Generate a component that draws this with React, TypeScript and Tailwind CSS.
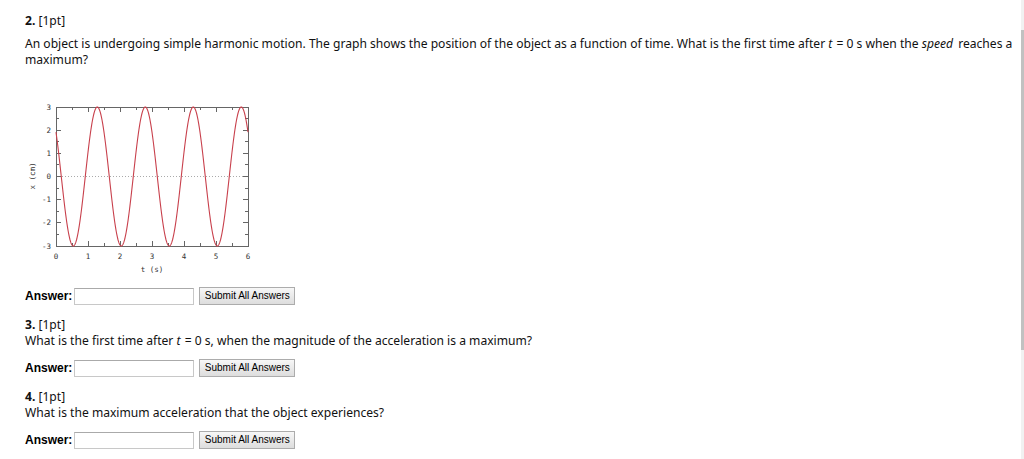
import React from "react";

const X0 = 36;
const X1 = 228;
const Y0 = 11;
const Y1 = 150;
const sx = (t: number) => X0 + ((X1 - X0) * t) / 6;
const sy = (v: number) => Y1 - ((Y1 - Y0) * (v + 3)) / 6;

function curvePath() {
  const w = (2 * Math.PI) / 1.5;
  let d = "";
  for (let i = 0; i <= 600; i++) {
    const t = (6 * i) / 600;
    const v = 3 * Math.cos(w * (t - 1.29));
    d += (i === 0 ? "M" : "L") + sx(t).toFixed(2) + " " + sy(v).toFixed(2) + " ";
  }
  return d;
}

function Graph() {
  const ticks: React.ReactNode[] = [];
  for (let i = 0; i <= 12; i++) {
    const t = i / 2;
    const len = i % 2 === 0 ? 5 : 3;
    const x = sx(t);
    ticks.push(<line key={"b" + i} x1={x} x2={x} y1={Y1} y2={Y1 - len} />);
    ticks.push(<line key={"t" + i} x1={x} x2={x} y1={Y0} y2={Y0 + len} />);
    const v = -3 + i / 2;
    const y = sy(v);
    ticks.push(<line key={"l" + i} x1={X0} x2={X0 + len} y1={y} y2={y} />);
    ticks.push(<line key={"r" + i} x1={X1} x2={X1 - len} y1={y} y2={y} />);
  }
  return (
    <svg width="240" height="180" className="block ml-[-5px]">
      <line x1={X0} x2={X1} y1={sy(0)} y2={sy(0)} stroke="#aaa" strokeWidth="1" strokeDasharray="1 2" />
      <g stroke="#666" strokeWidth="1" shapeRendering="crispEdges">
        <rect x={X0} y={Y0} width={X1 - X0} height={Y1 - Y0} fill="none" />
        {ticks}
      </g>
      <path d={curvePath()} fill="none" stroke="#c8404c" strokeWidth="1.1" />
      <g fill="#333" fontSize="7.5" fontFamily="'DejaVu Sans Mono', monospace">
        {[3, 2, 1, 0, -1, -2, -3].map((v) => (
          <text key={v} x={31} y={sy(v) + 2.5} textAnchor="end">
            {v}
          </text>
        ))}
        {[0, 1, 2, 3, 4, 5, 6].map((t) => (
          <text key={t} x={sx(t)} y={163} textAnchor="middle">
            {t}
          </text>
        ))}
        <text x={132} y={176} textAnchor="middle">t (s)</text>
        <text x={15} y={80} textAnchor="middle" transform="rotate(-90 15 80)">x (cm)</text>
      </g>
    </svg>
  );
}

function AnswerRow({ className = "" }: { className?: string }) {
  return (
    <div className={"flex items-center h-[18px] " + className}>
      <span className="font-['Liberation_Sans',Arial,sans-serif] text-[12px] font-bold text-black">Answer:</span>
      <input
        type="text"
        className="ml-[2px] w-[120px] h-[17px] bg-white border border-[#c8c8c8] border-t-[#aaa] outline-none"
      />
      <button className="ml-[5px] w-[96px] h-[18px] border border-[#acacac] bg-gradient-to-b from-[#f7f7f7] to-[#dddddd] font-['Liberation_Sans',Arial,sans-serif] text-[10px] text-black leading-none">
        Submit All Answers
      </button>
    </div>
  );
}

function Header({ n, className = "" }: { n: number; className?: string }) {
  return (
    <div className={"leading-[16px] " + className}>
      <b>{n}.</b> [1pt]
    </div>
  );
}

export default function App() {
  return (
    <div className="flex w-[1024px] h-[459px] bg-white overflow-hidden">
      <div className="flex-1 pl-[25px] pr-[6px] pt-[13px] font-['Noto_Sans',sans-serif] text-[12.1px] text-[#111]">
        <Header n={2} />
        <p className="leading-[16px] mt-[7px]">
          An object is undergoing simple harmonic motion. The graph shows the position of the object as a function of
          time. What is the first time after <i className="pr-[1px]">t</i> = 0 s when the <i className="pr-[2px]">speed</i>{" "}
          reaches a maximum?
        </p>
        <div className="mt-[28px]">
          <Graph />
        </div>
        <AnswerRow className="mt-[11px]" />
        <Header n={3} className="mt-[12px]" />
        <p className="leading-[16px]">
          What is the first time after <i className="pr-[1px]">t</i> = 0 s, when the magnitude of the acceleration is a
          maximum?
        </p>
        <AnswerRow className="mt-[10px]" />
        <Header n={4} className="mt-[12px]" />
        <p className="leading-[16px]">What is the maximum acceleration that the object experiences?</p>
        <AnswerRow className="mt-[10px]" />
      </div>
      <div className="w-[3px] bg-[#f1f1f1] pt-[30px]">
        <div className="h-[320px] bg-[#c1c1c1]" />
      </div>
    </div>
  );
}
